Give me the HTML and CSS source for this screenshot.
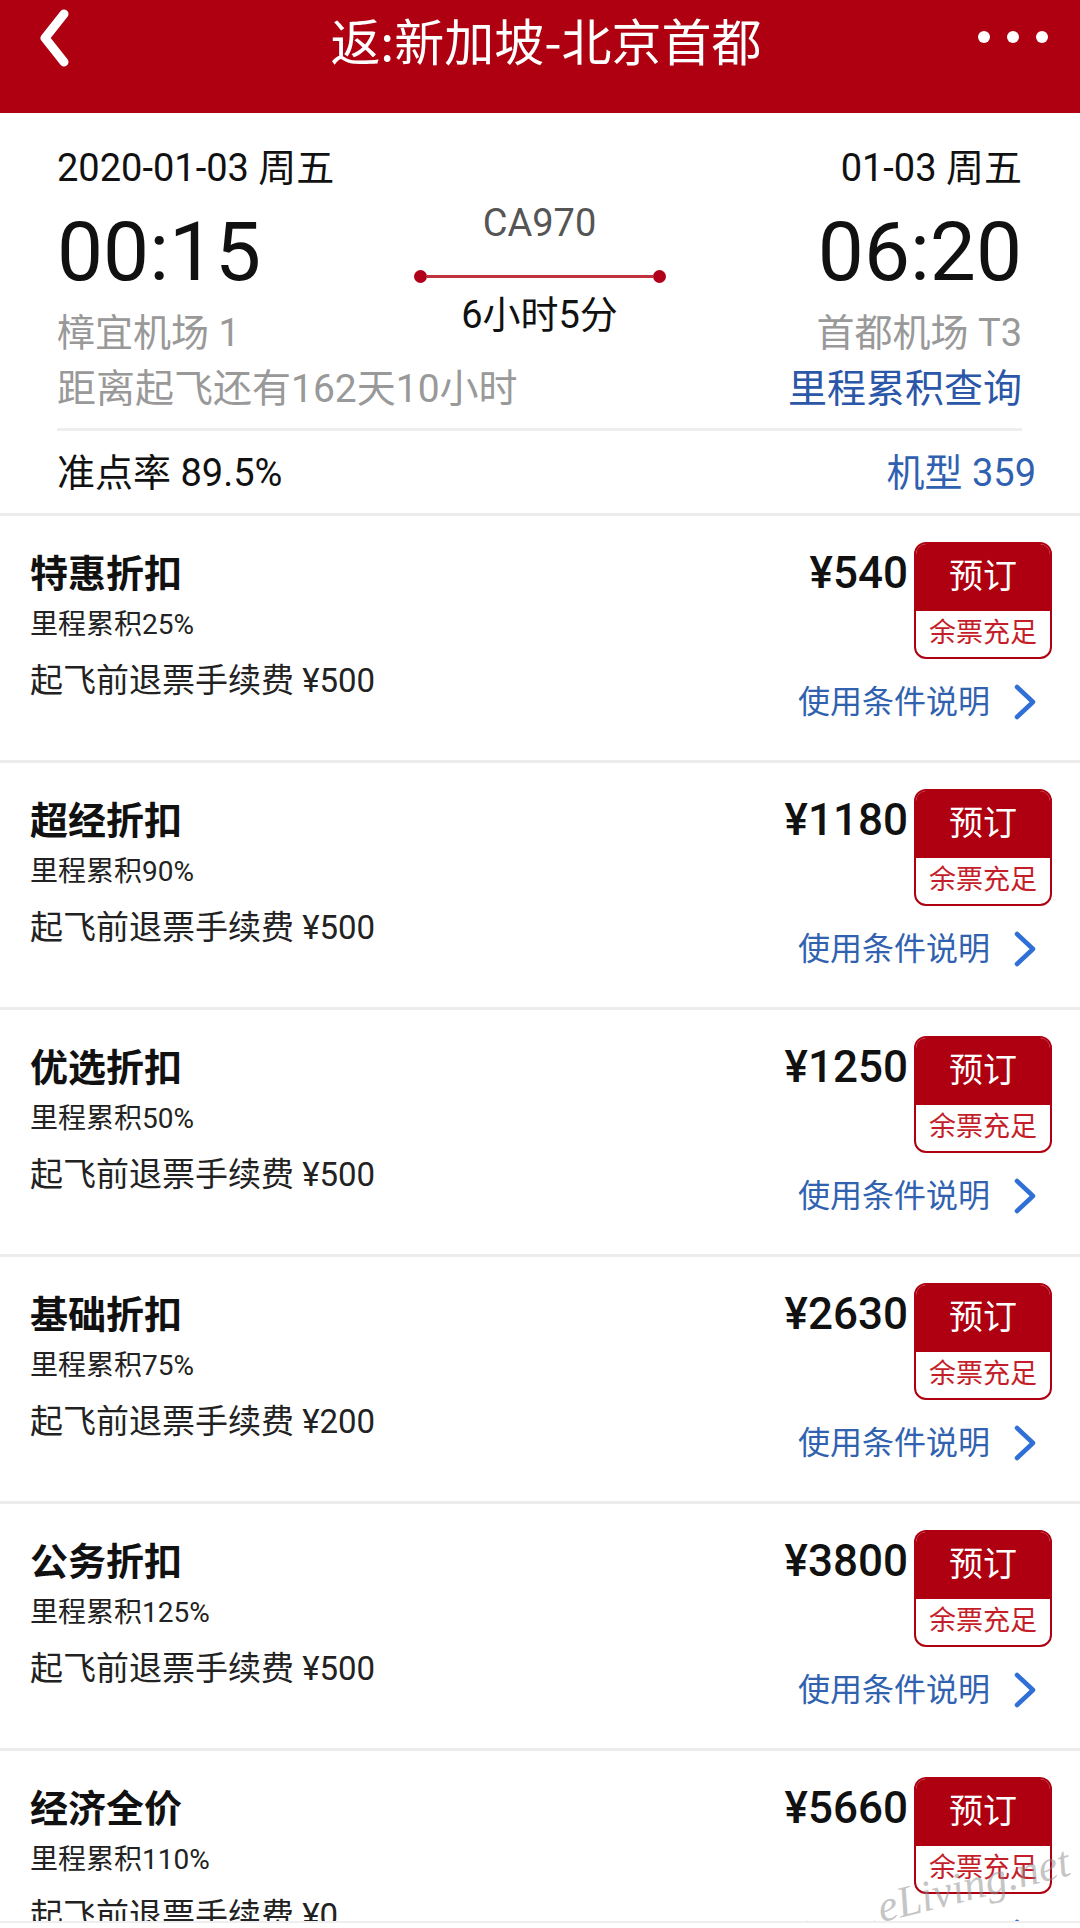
FILE: index.html
```html
<!DOCTYPE html>
<html>

<head>
  <meta charset="UTF-8">
  <title>返:新加坡-北京首都</title>
  <link rel="stylesheet" href="styles.css">
</head>

<body>
  <div class="header">
    <svg class="back" width="40" height="60" viewBox="0 0 40 60">
      <polyline points="30,6 11,30 30,54" fill="none" stroke="#fff" stroke-width="9" stroke-linecap="round" stroke-linejoin="round" />
    </svg>
    <div class="title">返:新加坡-北京首都</div>
    <div class="more"><span></span><span></span><span></span></div>
  </div>

  <div class="flight">
    <div class="side">
      <div class="date">2020-01-03 周五</div>
      <div class="time">00:15</div>
      <div class="airport">樟宜机场 1</div>
      <div class="gray-line">距离起飞还有162天10小时</div>
    </div>
    <div class="middle">
      <div class="flight-no">CA970</div>
      <div class="route"><i></i><b></b><i></i></div>
      <div class="duration">6小时5分</div>
    </div>
    <div class="side right">
      <div class="date">01-03 周五</div>
      <div class="time">06:20</div>
      <div class="airport">首都机场 T3</div>
      <div class="blue-line">里程累积查询</div>
    </div>
  </div>
  <div class="divider"></div>
  <div class="punctual">
    <span>准点率 89.5%</span>
    <span class="blue">机型 359</span>
  </div>

  <div class="cards">
    <div class="card">
      <div class="info">
        <div class="name">特惠折扣</div>
        <div class="miles">里程累积25%</div>
        <div class="fee">起飞前退票手续费 ¥500</div>
      </div>
      <div class="buy">
        <div class="buy-top">
          <div class="price">¥540</div>
          <div class="btn"><div class="btn-main">预订</div><div class="btn-sub">余票充足</div></div>
        </div>
        <div class="rules">使用条件说明 <svg width="26" height="38" viewBox="0 0 26 38"><polyline points="5,4 21,19 5,34" fill="none" stroke="#2f6fd6" stroke-width="4.5" stroke-linecap="round" stroke-linejoin="round" /></svg></div>
      </div>
    </div>

    <div class="card">
      <div class="info">
        <div class="name">超经折扣</div>
        <div class="miles">里程累积90%</div>
        <div class="fee">起飞前退票手续费 ¥500</div>
      </div>
      <div class="buy">
        <div class="buy-top">
          <div class="price">¥1180</div>
          <div class="btn"><div class="btn-main">预订</div><div class="btn-sub">余票充足</div></div>
        </div>
        <div class="rules">使用条件说明 <svg width="26" height="38" viewBox="0 0 26 38"><polyline points="5,4 21,19 5,34" fill="none" stroke="#2f6fd6" stroke-width="4.5" stroke-linecap="round" stroke-linejoin="round" /></svg></div>
      </div>
    </div>

    <div class="card">
      <div class="info">
        <div class="name">优选折扣</div>
        <div class="miles">里程累积50%</div>
        <div class="fee">起飞前退票手续费 ¥500</div>
      </div>
      <div class="buy">
        <div class="buy-top">
          <div class="price">¥1250</div>
          <div class="btn"><div class="btn-main">预订</div><div class="btn-sub">余票充足</div></div>
        </div>
        <div class="rules">使用条件说明 <svg width="26" height="38" viewBox="0 0 26 38"><polyline points="5,4 21,19 5,34" fill="none" stroke="#2f6fd6" stroke-width="4.5" stroke-linecap="round" stroke-linejoin="round" /></svg></div>
      </div>
    </div>

    <div class="card">
      <div class="info">
        <div class="name">基础折扣</div>
        <div class="miles">里程累积75%</div>
        <div class="fee">起飞前退票手续费 ¥200</div>
      </div>
      <div class="buy">
        <div class="buy-top">
          <div class="price">¥2630</div>
          <div class="btn"><div class="btn-main">预订</div><div class="btn-sub">余票充足</div></div>
        </div>
        <div class="rules">使用条件说明 <svg width="26" height="38" viewBox="0 0 26 38"><polyline points="5,4 21,19 5,34" fill="none" stroke="#2f6fd6" stroke-width="4.5" stroke-linecap="round" stroke-linejoin="round" /></svg></div>
      </div>
    </div>

    <div class="card">
      <div class="info">
        <div class="name">公务折扣</div>
        <div class="miles">里程累积125%</div>
        <div class="fee">起飞前退票手续费 ¥500</div>
      </div>
      <div class="buy">
        <div class="buy-top">
          <div class="price">¥3800</div>
          <div class="btn"><div class="btn-main">预订</div><div class="btn-sub">余票充足</div></div>
        </div>
        <div class="rules">使用条件说明 <svg width="26" height="38" viewBox="0 0 26 38"><polyline points="5,4 21,19 5,34" fill="none" stroke="#2f6fd6" stroke-width="4.5" stroke-linecap="round" stroke-linejoin="round" /></svg></div>
      </div>
    </div>

    <div class="card">
      <div class="info">
        <div class="name">经济全价</div>
        <div class="miles">里程累积110%</div>
        <div class="fee">起飞前退票手续费 ¥0</div>
      </div>
      <div class="buy">
        <div class="buy-top">
          <div class="price">¥5660</div>
          <div class="btn"><div class="btn-main">预订</div><div class="btn-sub">余票充足</div></div>
        </div>
        <div class="rules">使用条件说明 <svg width="26" height="38" viewBox="0 0 26 38"><polyline points="5,4 21,19 5,34" fill="none" stroke="#2f6fd6" stroke-width="4.5" stroke-linecap="round" stroke-linejoin="round" /></svg></div>
      </div>
    </div>
  </div>

  <div class="bottom-edge"></div>
  <div class="watermark">eLiving.net</div>
</body>

</html>
```

FILE: styles.css
```css
body {
  margin: 0;
  width: 1080px;
  height: 1928px;
  overflow: hidden;
  position: relative;
  background: #fff;
  color: #111;
  font-family: Roboto, "Noto Sans CJK SC", sans-serif;
}

.header {
  height: 113px;
  background: #ae0010;
  display: flex;
  align-items: flex-start;
  padding: 0 32px 0 34px;
  box-sizing: border-box;
}

.back {
  margin-top: 8px;
}

.title {
  flex: 1;
  text-align: center;
  color: #fff;
  font-family: "Noto Sans CJK SC", sans-serif;
  font-size: 50px;
  line-height: 60px;
  margin-top: 9px;
  padding-left: 40px;
}

.more {
  display: flex;
  gap: 17px;
  margin-top: 31px;
}

.more span {
  width: 12px;
  height: 12px;
  border-radius: 50%;
  background: #fff;
}

.flight {
  display: grid;
  grid-template-columns: minmax(0, 1fr) auto minmax(0, 1fr);
  padding: 33px 58px 0 57px;
}

.side {
  display: flex;
  flex-direction: column;
}

.side.right {
  align-items: flex-end;
}

.date {
  font-size: 38px;
  line-height: 44px;
  white-space: nowrap;
}

.time {
  font-size: 82px;
  line-height: 84px;
  margin-top: 20px;
}

.airport {
  font-size: 38px;
  line-height: 44px;
  margin-top: 17px;
  color: #999;
  white-space: nowrap;
}

.gray-line {
  font-size: 39px;
  line-height: 44px;
  margin-top: 12px;
  color: #999;
  white-space: nowrap;
}

.blue-line {
  font-size: 39px;
  line-height: 44px;
  margin-top: 12px;
  color: #2b57a8;
  white-space: nowrap;
}

.middle {
  display: flex;
  flex-direction: column;
  align-items: center;
  padding-top: 55px;
}

.flight-no {
  font-size: 38px;
  line-height: 44px;
  color: #555;
}

.route {
  display: flex;
  align-items: center;
  width: 252px;
  height: 14px;
  margin-top: 24px;
}

.route i {
  width: 13px;
  height: 13px;
  border-radius: 50%;
  background: #b0001a;
}

.route b {
  flex: 1;
  height: 3px;
  background: #c0303d;
}

.duration {
  font-size: 38px;
  line-height: 44px;
  margin-top: 10px;
  white-space: nowrap;
}

.divider {
  height: 3px;
  background: #eee;
  margin: 17px 58px 0 57px;
}

.punctual {
  display: flex;
  justify-content: space-between;
  padding: 20px 44px 18px 57px;
  font-size: 38px;
  line-height: 44px;
}

.blue {
  color: #3060b0;
}

.card {
  height: 247px;
  box-sizing: border-box;
  border-top: 3px solid #ececec;
  display: flex;
  justify-content: space-between;
  padding: 0 28px 0 30px;
}

.info {
  padding-top: 32px;
}

.name {
  font-family: "Noto Sans CJK SC", sans-serif;
  font-weight: 700;
  font-size: 38px;
  line-height: 46px;
}

.miles {
  font-size: 28px;
  line-height: 32px;
  margin-top: 15px;
  color: #222;
}

.fee {
  font-size: 33px;
  line-height: 40px;
  margin-top: 20px;
  color: #222;
}

.buy {
  display: flex;
  flex-direction: column;
  align-items: flex-end;
  padding-top: 26px;
}

.buy-top {
  display: flex;
  gap: 6px;
}

.price {
  font-size: 44px;
  font-weight: 500;
  line-height: 48px;
  margin-top: 7px;
}

.btn {
  width: 138px;
  height: 117px;
  box-sizing: border-box;
  border: 2px solid #ae0010;
  border-radius: 12px;
  overflow: hidden;
  text-align: center;
}

.btn-main {
  height: 67px;
  background: #ae0010;
  color: #fff;
  font-size: 34px;
  line-height: 64px;
}

.btn-sub {
  color: #c41e2a;
  font-size: 27px;
  line-height: 44px;
}

.rules {
  display: flex;
  align-items: center;
  gap: 22px;
  margin-top: 23px;
  margin-right: 14px;
  font-size: 32px;
  line-height: 40px;
  color: #3162b0;
}

.bottom-edge {
  position: absolute;
  left: 0;
  right: 0;
  bottom: 0;
  height: 5px;
  border-top: 2px solid #eee;
  background: #fff;
}

.watermark {
  position: absolute;
  right: 8px;
  bottom: 18px;
  font-family: "Liberation Serif", serif;
  font-style: italic;
  font-size: 44px;
  color: rgba(140, 140, 140, 0.5);
  transform: rotate(-14deg);
}
```
